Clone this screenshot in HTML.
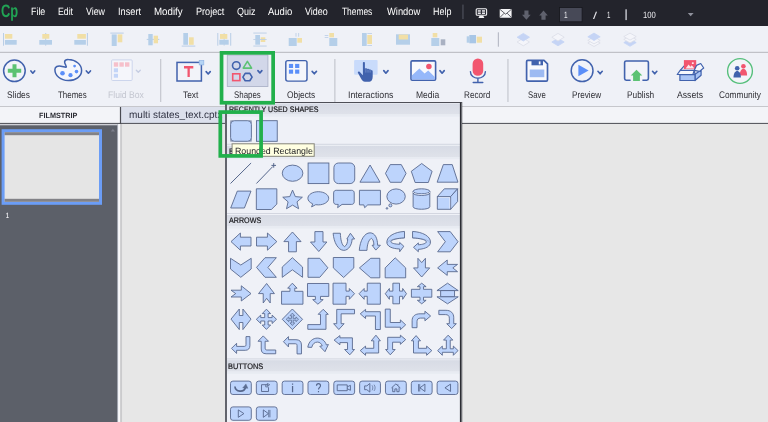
<!DOCTYPE html>
<html><head><meta charset="utf-8"><title>Adobe Captivate - Shapes</title>
<style>
html,body{margin:0;padding:0;}
body{width:768px;height:422px;overflow:hidden;position:relative;background:#e7e7e7;font-family:"Liberation Sans", sans-serif;}
.abs{position:absolute;}
#txt{position:absolute;left:0;top:0;width:768px;height:422px;will-change:transform;z-index:40;}
.t{position:absolute;white-space:nowrap;transform-origin:0 50%;font-family:"Liberation Sans", sans-serif;text-rendering:geometricPrecision;}
.t.hd{-webkit-text-stroke:0.25px currentColor;}
svg{position:absolute;left:0;top:0;overflow:visible;}

#titlebar{left:0;top:0;width:768px;height:26px;background:#23242c;}
#alignbar{left:0;top:26px;width:768px;height:26px;background:#eff1f7;}
#toolbar{left:0;top:52px;width:768px;height:55px;background:#eff1f7;}
#tabrow{left:0;top:107px;width:768px;height:17px;background:#f3f4f8;}
#filmstrip{left:0;top:124px;width:118px;height:298px;background:#5c6069;}
#stage{left:121px;top:124px;width:647px;height:298px;background:#e7e7e7;}
#panel{left:225px;top:102px;width:237px;height:320px;background:#eff1f7;}
#overlay{z-index:50;}

</style></head><body>
<div class="abs" id="titlebar"></div>
<div class="abs" id="alignbar"></div>
<div class="abs" id="toolbar"></div>
<div class="abs" id="tabrow"></div>
<div class="abs" id="stage"></div><div class="abs" id="filmstrip"></div>
<svg width="768" height="422" viewBox="0 0 768 422" id="chrome"><defs><linearGradient id="gap" x1="0" x2="1" y1="0" y2="0"><stop offset="0" stop-color="#e4e8f2"/><stop offset="0.5" stop-color="#f8f8f9"/><stop offset="1" stop-color="#fafafa"/></linearGradient><linearGradient id="hdr" x1="0" x2="0" y1="0" y2="1"><stop offset="0" stop-color="#d7dbe5"/><stop offset="1" stop-color="#dfe2ea"/></linearGradient></defs>
<rect x="0" y="51.8" width="768" height="1.1" fill="#bbbcc1" />
<rect x="0" y="106" width="768" height="1" fill="#c6c7cc" />
<rect x="0" y="107" width="120" height="16" fill="#f3f4f8" />
<rect x="121" y="107" width="105" height="16" fill="#dce0ec" />
<rect x="0" y="124" width="117.5" height="1.3" fill="#cfd0d6" />
<rect x="117.5" y="124" width="3.2" height="298" fill="url(#gap)" />
<rect x="120.6" y="124" width="1.0" height="298" fill="#9c9ca0" />
<rect x="121.6" y="124" width="0.6" height="298" fill="#e7e7e7" />
<rect x="0" y="122.9" width="768" height="1" fill="#4b4c53" />
<rect x="119.9" y="107" width="1.2" height="17" fill="#4a4b52" />
<rect x="1.6" y="129.2" width="100.4" height="75.6" fill="#6b9df6" />
<rect x="4.6" y="132.2" width="94.4" height="69.6" fill="#e5e5e5" />
<rect x="4.6" y="132.2" width="94.4" height="3" fill="#828287" />
<rect x="4.6" y="198.8" width="94.4" height="3" fill="#828287" />
<rect x="160" y="59" width="1.3" height="43" fill="#c8cad2" />
<rect x="334.2" y="59" width="1.3" height="43" fill="#c8cad2" />
<rect x="507.3" y="59" width="1.3" height="43" fill="#c8cad2" />
<rect x="227.3" y="55" width="40.6" height="31.5" fill="#d2d7e9" stroke="#adb2c8" stroke-width="0.9"/></svg>
<svg width="768" height="422" viewBox="0 0 768 422" id="topicons"><rect x="462.3" y="4.6" width="1.3" height="14.5" fill="#4b4d58"/>
<rect x="476.2" y="8.7" width="10.4" height="6.6" rx="1" fill="#2a2b34" stroke="#f2f2f4" stroke-width="1.1"/>
<rect x="477.8" y="10.2" width="3" height="1.5" fill="#e8e8ec"/><rect x="482" y="10.2" width="3" height="1.5" fill="#e8e8ec"/>
<rect x="477.8" y="12.5" width="3" height="1.5" fill="#e8e8ec"/><rect x="482" y="12.5" width="3" height="1.5" fill="#e8e8ec"/>
<path d="M479.6 15.8 L483.2 15.8 L484.4 17.9 L478.4 17.9 Z" fill="#f2f2f4"/>
<rect x="499.7" y="9.1" width="11.9" height="8.6" rx="0.6" fill="#f4f4f6"/>
<path d="M500 9.4 L505.65 14.2 L511.3 9.4 M500 17.4 L504.2 13.2 M511.3 17.4 L507.1 13.2" fill="none" stroke="#3a3b44" stroke-width="0.8"/>
<path d="M524.4 10.6 H528.5 V14.8 H530.7 L526.4 19.7 L522 14.8 H524.4 Z" fill="#5f616d"/>
<path d="M541.4 19.7 H545.6 V15.5 H547.8 L543.5 10.6 L539.2 15.5 H541.4 Z" fill="#5f616d"/>
<rect x="559.5" y="7.4" width="22.6" height="14.4" fill="#474957" stroke="#16171c" stroke-width="0.8"/>
<rect x="625.4" y="9.3" width="1.4" height="10.8" fill="#c9cad2"/>
<path d="M687.8 13 H693.6 L690.7 16.2 Z" fill="#8f919c"/>
<rect x="3" y="33" width="1.00" height="12.70" fill="#b9cee6"/>
<rect x="4.9" y="34" width="7.40" height="4.70" fill="#f1dfa6"/>
<rect x="4.9" y="40" width="11.80" height="4.70" fill="#b5cfe9"/>
<rect x="45.2" y="33" width="1.00" height="12.70" fill="#b9cee6"/>
<rect x="42.3" y="34" width="7.00" height="4.70" fill="#f1dfa6"/>
<rect x="39.3" y="40" width="12.70" height="4.70" fill="#b5cfe9"/>
<rect x="86.9" y="33" width="1.00" height="12.70" fill="#b9cee6"/>
<rect x="77.3" y="34" width="8.60" height="4.70" fill="#f1dfa6"/>
<rect x="74.3" y="40" width="11.60" height="4.70" fill="#b5cfe9"/>
<rect x="110.3" y="32.6" width="13.40" height="1.00" fill="#b9cee6"/>
<rect x="111.7" y="34.4" width="5.00" height="11.60" fill="#b5cfe9"/>
<rect x="117.7" y="34.4" width="4.60" height="7.90" fill="#f1dfa6"/>
<rect x="146.7" y="38.9" width="12.60" height="1.00" fill="#b9cee6"/>
<rect x="148.3" y="34" width="4.40" height="11.30" fill="#b5cfe9"/>
<rect x="153.7" y="35.7" width="4.30" height="7.60" fill="#f1dfa6"/>
<rect x="181.7" y="45.6" width="13.60" height="1.00" fill="#b9cee6"/>
<rect x="183.3" y="33" width="4.70" height="11.80" fill="#b5cfe9"/>
<rect x="189" y="37.3" width="4.70" height="7.50" fill="#f1dfa6"/>
<rect x="217.3" y="33" width="1.00" height="12.70" fill="#b9cee6"/>
<rect x="230.2" y="33" width="1.00" height="12.70" fill="#b9cee6"/>
<rect x="223.7" y="33" width="0.80" height="12.70" fill="#b9cee6"/>
<rect x="220" y="34" width="7.30" height="4.90" fill="#f1dfa6"/>
<rect x="219.3" y="39.8" width="9.40" height="4.90" fill="#b5cfe9"/>
<rect x="253.3" y="32.6" width="13.40" height="0.90" fill="#b9cee6"/>
<rect x="253.3" y="45.6" width="13.40" height="0.90" fill="#b9cee6"/>
<rect x="255.3" y="35" width="4.70" height="9.70" fill="#b5cfe9"/>
<rect x="260.7" y="37.3" width="4.60" height="4.70" fill="#f1dfa6"/>
<rect x="253.3" y="39.2" width="13.40" height="0.80" fill="#b9cee6"/>
<rect x="288.7" y="38" width="8.00" height="8.00" fill="#b5cfe9"/>
<rect x="297.3" y="38" width="4.70" height="4.70" fill="#f1dfa6"/>
<rect x="295.6" y="33" width="0.80" height="3.70" fill="#b9cee6"/>
<rect x="298.3" y="33" width="0.80" height="3.70" fill="#b9cee6"/>
<rect x="329.3" y="33" width="4.70" height="4.30" fill="#f1dfa6"/>
<rect x="329.3" y="38" width="8.00" height="8.00" fill="#b5cfe9"/>
<rect x="324.7" y="35.2" width="3.60" height="0.80" fill="#b9cee6"/>
<rect x="324.7" y="37" width="3.60" height="0.80" fill="#b9cee6"/>
<rect x="362" y="33" width="4.70" height="13.00" fill="#b5cfe9"/>
<rect x="367.3" y="35" width="4.70" height="9.00" fill="#f1dfa6"/>
<rect x="367.3" y="33" width="4.70" height="0.80" fill="#b9cee6"/>
<rect x="367.3" y="45.2" width="4.70" height="0.80" fill="#b9cee6"/>
<rect x="396" y="34.3" width="14.00" height="10.40" fill="#b5cfe9"/>
<rect x="398.7" y="34.6" width="9.30" height="4.90" fill="#f1dfa6"/>
<rect x="432.7" y="33" width="4.60" height="4.30" fill="#f1dfa6"/>
<rect x="431.3" y="38" width="8.00" height="8.00" fill="#b5cfe9"/>
<rect x="440.7" y="39.3" width="4.60" height="6.00" fill="#a9b1c2"/>
<rect x="466.7" y="36.3" width="2.60" height="6.40" fill="#b5cfe9"/>
<rect x="469.3" y="35" width="6.70" height="8.30" fill="#a8c6e6"/>
<rect x="476.7" y="36.7" width="5.30" height="6.00" fill="#f1dfa6"/>
<rect x="497.8" y="32.3" width="1.20" height="14.40" fill="#b9bcc8"/>
<path d="M523.3 38.2 L529.5 42 L523.3 45.8 L517.0999999999999 42 Z" fill="#f4f5fa" stroke="#dadde7" stroke-width="0.8"/>
<path d="M523.3 33.400000000000006 L529.5 37.2 L523.3 41.0 L517.0999999999999 37.2 Z" fill="#c5d4f5" stroke="#c5d4f5" stroke-width="0.8"/>
<path d="M558 38.2 L564.2 42 L558 45.8 L551.8 42 Z" fill="#c5d4f5" stroke="#c5d4f5" stroke-width="0.8"/>
<path d="M558 33.400000000000006 L564.2 37.2 L558 41.0 L551.8 37.2 Z" fill="#f4f5fa" stroke="#dadde7" stroke-width="0.8"/>
<path d="M594 39.5 L600.2 43 L594 46.5 L587.8 43 Z" fill="#f4f5fa" stroke="#dadde7" stroke-width="0.8"/>
<path d="M594 36.9 L600.2 40.4 L594 43.9 L587.8 40.4 Z" fill="#f4f5fa" stroke="#dadde7" stroke-width="0.8"/>
<path d="M594 33.099999999999994 L600.2 36.8 L594 40.5 L587.8 36.8 Z" fill="#c5d4f5" stroke="#c5d4f5" stroke-width="0.8"/>
<path d="M630 38.9 L636.2 42.6 L630 46.300000000000004 L623.8 42.6 Z" fill="#c5d4f5" stroke="#c5d4f5" stroke-width="0.8"/>
<path d="M630 35.9 L636.2 39.4 L630 42.9 L623.8 39.4 Z" fill="#f4f5fa" stroke="#dadde7" stroke-width="0.8"/>
<path d="M630 33.1 L636.2 36.6 L630 40.1 L623.8 36.6 Z" fill="#f4f5fa" stroke="#dadde7" stroke-width="0.8"/>
<circle cx="14.4" cy="70.8" r="10.8" fill="#f1f3f9" stroke="#4162ad" stroke-width="1.5"/>
<path d="M12.5 64.2 H16.5 V68.7 H21.2 V72.7 H16.5 V77.2 H12.5 V72.7 H7.8 V68.7 H12.5 Z" fill="#5cc273"/>
<path d="M30.91 70.98 L32.8 73.22 L34.69 70.98" fill="none" stroke="#4162ad" stroke-width="1.65" stroke-linecap="round" stroke-linejoin="round"/>
<path d="M54.9 69.5 C54.9 66.5 58 65.6 61 66.2 C63.5 66.7 65.5 67.6 66.2 67.2 C67 66.6 64.4 63.5 64.6 61.8 C64.9 60 66.5 59.5 68.4 59.6 C75.5 59.8 81.6 64.2 81.6 70.4 C81.6 76.5 75.5 80.6 68.2 80.6 C60.5 80.6 54.9 75.5 54.9 69.5 Z" fill="#f4f6fc" stroke="#4162ad" stroke-width="1.5" stroke-linejoin="round"/>
<circle cx="62.5" cy="73.3" r="2.3" fill="#5b8ff9"/><circle cx="70.5" cy="75.2" r="2.1" fill="#5b8ff9"/><circle cx="76.5" cy="71.6" r="1.8" fill="#5b8ff9"/><circle cx="74.6" cy="66.1" r="1.4" fill="#5b8ff9"/>
<path d="M86.34 70.98 L88.4 73.22 L90.46 70.98" fill="none" stroke="#4162ad" stroke-width="1.65" stroke-linecap="round" stroke-linejoin="round"/>
<rect x="111.6" y="59.9" width="20.6" height="20.6" rx="1" fill="#f5f6fb" stroke="#ccd5ec" stroke-width="1"/>
<rect x="113.8" y="62.3" width="4.40" height="4.40" fill="#f6c0cb"/>
<rect x="119.4" y="62.3" width="4.40" height="4.40" fill="#f6c0cb"/>
<rect x="125" y="62.3" width="4.40" height="4.40" fill="#f6c0cb"/>
<rect x="113.8" y="68.3" width="4.20" height="4.00" fill="#c3d5f8"/>
<rect x="113.8" y="73.8" width="4.20" height="3.90" fill="#c3d5f8"/>
<path d="M136.32 70.16 L138.3 72.24 L140.28 70.16" fill="none" stroke="#c5cde2" stroke-width="1.3499999999999999" stroke-linecap="round" stroke-linejoin="round"/>
<rect x="177" y="62.4" width="24.4" height="18.6" fill="#f2f3f9" stroke="#4162ad" stroke-width="1.5"/>
<path d="M184 66.1 H193.3 V68.4 H189.8 V77 H187.5 V68.4 H184 Z" fill="#f2566f"/>
<rect x="199.2" y="60.5" width="4.6" height="4.4" fill="#b5d4f4" stroke="#8fb4e4" stroke-width="0.7"/>
<path d="M206.14 71.6 L208.2 74.0 L210.26 71.6" fill="none" stroke="#4162ad" stroke-width="1.65" stroke-linecap="round" stroke-linejoin="round"/>
<circle cx="236.3" cy="65.6" r="3.8" fill="none" stroke="#4162ad" stroke-width="1.6"/>
<path d="M247.4 61.4 L251.6 68.1 H243.2 Z" fill="none" stroke="#5cc273" stroke-width="1.6" stroke-linejoin="round"/>
<rect x="232.7" y="73.8" width="7.2" height="6.8" fill="none" stroke="#f2566f" stroke-width="1.6"/>
<path d="M245.2 73.4 H249.8 L252.1 77.1 L249.8 80.7 H245.2 L242.9 77.1 Z" fill="none" stroke="#4162ad" stroke-width="1.6" stroke-linejoin="round"/>
<path d="M257.92 70.6 L259.9 73.0 L261.88 70.6" fill="none" stroke="#4162ad" stroke-width="1.65" stroke-linecap="round" stroke-linejoin="round"/>
<rect x="285.8" y="60.6" width="21.2" height="20.5" rx="2" fill="#f5f6fb" stroke="#4162ad" stroke-width="1.45"/>
<rect x="288.9" y="63.9" width="4.20" height="4.10" fill="#5b8ff9"/>
<rect x="295.1" y="63.9" width="4.20" height="4.10" fill="#5b8ff9"/>
<rect x="288.9" y="69.6" width="4.20" height="4.10" fill="#5b8ff9"/>
<rect x="295.1" y="69.6" width="4.20" height="4.10" fill="#5b8ff9"/>
<path d="M312.15 71.4 L314.29999999999995 73.8 L316.45 71.4" fill="none" stroke="#4162ad" stroke-width="1.65" stroke-linecap="round" stroke-linejoin="round"/>
<rect x="354.1" y="60.1" width="23.5" height="14.7" rx="1" fill="#c9dbfb"/>
<path d="M362.9 63 C362.9 61.7 364.9 61.7 364.9 63 V68.6 L365.2 68.4 C366 68 367 68.2 367.4 68.9 C368.2 68.5 369.2 68.8 369.5 69.5 C370.4 69.2 371.3 69.6 371.5 70.3 C372.2 70.2 372.7 70.8 372.7 71.5 V76.5 C372.7 79.5 371.5 81.7 369.5 81.7 H365 C363 81.7 362 80 361 78.4 L358 73 C357.4 71.8 358.5 70.8 359.6 71.8 L362.9 75.2 Z" fill="#4162ad"/>
<path d="M365.9 69.2 V72.6 M368 69.6 V72.6 M370.1 70.2 V72.6" fill="none" stroke="#9fb6e6" stroke-width="0.5"/>
<path d="M383.75 70.62 L385.9 73.18 L388.05 70.62" fill="none" stroke="#4162ad" stroke-width="1.65" stroke-linecap="round" stroke-linejoin="round"/>
<rect x="411" y="60.9" width="24.6" height="19.4" rx="1.2" fill="#f8f9fd" stroke="#4162ad" stroke-width="1.6"/>
<path d="M411.8 79.5 V75.6 L419.4 68.4 L424.6 73.6 L428.2 70.6 L434.8 77 V79.5 Z" fill="#96b8fa"/>
<circle cx="428.9" cy="66.5" r="2.75" fill="#f2566f"/>
<path d="M439.95 70.62 L442.1 73.18 L444.25 70.62" fill="none" stroke="#4162ad" stroke-width="1.65" stroke-linecap="round" stroke-linejoin="round"/>
<rect x="472.6" y="58.5" width="10.6" height="17.2" rx="5.3" fill="#f2566f"/>
<path d="M470.4 71.6 C470.4 80.4 485.4 80.4 485.4 71.6 M477.9 78.2 V82.4 M473.2 82.5 H482.8" fill="none" stroke="#4162ad" stroke-width="1.4" stroke-linecap="round"/>
<path d="M527.8 60.4 H544 L547.5 63.9 V79.8 C547.5 80.6 547 81.2 546.2 81.2 H527.8 C527 81.2 526.6 80.6 526.6 79.8 V61.8 C526.6 61 527 60.4 527.8 60.4 Z" fill="#f8f9fd" stroke="#4162ad" stroke-width="1.7" stroke-linejoin="round"/>
<rect x="531.5" y="60.6" width="11.50" height="4.70" fill="#4162ad"/>
<rect x="538.8" y="61.4" width="1.70" height="3.00" fill="#f8f9fd"/>
<rect x="529.7" y="69.5" width="14.60" height="7.70" fill="#9dbaf2"/>
<circle cx="582.1" cy="70.7" r="10.9" fill="#f1f3f9" stroke="#4162ad" stroke-width="1.5"/>
<path d="M578.4 64.8 L588.6 70.5 L578.4 76.2 Z" fill="#5b8ff9"/>
<path d="M597.95 71.31 L600.1 73.79 L602.25 71.31" fill="none" stroke="#4162ad" stroke-width="1.65" stroke-linecap="round" stroke-linejoin="round"/>
<path d="M630.6 80.2 H626.2 C625.2 80.2 624.6 79.6 624.6 78.6 V62.6 C624.6 61.6 625.2 61 626.2 61 H646.8 C647.8 61 648.4 61.6 648.4 62.6 V78.6 C648.4 79.6 647.8 80.2 646.8 80.2 H642.4" fill="#f2f3f9" stroke="#4162ad" stroke-width="1.6"/>
<path d="M636.5 69.8 L642.3 75.4 H639.9 V81 H633.1 V75.4 H630.7 Z" fill="#5cc273"/>
<path d="M652.55 71.31 L654.7 73.79 L656.85 71.31" fill="none" stroke="#4162ad" stroke-width="1.65" stroke-linecap="round" stroke-linejoin="round"/>
<path d="M680.2 70.3 L684 66.1 H697" fill="none" stroke="#4162ad" stroke-width="1.2"/>
<rect x="683.9" y="60.1" width="12.3" height="9" fill="#f2566f"/>
<path d="M685.6 68.6 L688.6 64.4 L690.4 66.8 L691.8 65.2 L694.4 68.6 Z" fill="#fde8ec"/><rect x="691.9" y="62.3" width="1.8" height="1.7" fill="#fde8ec"/>
<path d="M695 74.3 L701.1 69.9 V75.2 L695 80.5 Z" fill="#a9c4f5" stroke="#4162ad" stroke-width="1.2" stroke-linejoin="round"/>
<path d="M679.9 74.6 H695 V80.5 H679.9 Z" fill="#a9c4f5" stroke="#4162ad" stroke-width="1.2" stroke-linejoin="round"/>
<path d="M677.2 74.5 L680.2 70.3 H694.3 L692.9 74.4 Z" fill="#f6f8fd" stroke="#4162ad" stroke-width="1.2" stroke-linejoin="round"/>
<path d="M694.3 70.3 L696.5 65.4 L700.7 63.5 L703.7 68 L699.4 71.4 Z" fill="#f6f8fd" stroke="#4162ad" stroke-width="1.2" stroke-linejoin="round"/>
<path d="M694.3 70.3 L695 74.3" fill="none" stroke="#4162ad" stroke-width="1.2"/>
<circle cx="740" cy="71" r="12.4" fill="#f2f4f9" stroke="#55bf7b" stroke-width="1.35"/>
<circle cx="743.4" cy="66.2" r="2.3" fill="#f2566f"/><path d="M739.7 75.6 C739.7 66.6 747.1 66.6 747.1 75.6 Z" fill="#f2566f"/>
<circle cx="737.2" cy="68.2" r="2.3" fill="#4162ad"/><path d="M733.5 77.4 C733.5 68.8 740.9 68.8 740.9 77.4 Z" fill="#4162ad"/>
<path d="M110.8 131.4 L112.9 128.8 L115 131.4 Z" fill="#7b7e8b"/></svg>
<div class="abs" id="panel"></div>
<svg width="768" height="422" viewBox="0 0 768 422" id="panelchrome"><rect x="227" y="103.5" width="233" height="11" fill="url(#hdr)" />
<rect x="227" y="114.5" width="233" height="2.2" fill="#e8ebf2" />
<rect x="227" y="145.8" width="233" height="11.2" fill="url(#hdr)" />
<rect x="227" y="157.0" width="233" height="2.2" fill="#e8ebf2" />
<rect x="227" y="215" width="233" height="11.4" fill="url(#hdr)" />
<rect x="227" y="226.4" width="233" height="2.2" fill="#e8ebf2" />
<rect x="227" y="360.2" width="233" height="11.4" fill="url(#hdr)" />
<rect x="227" y="371.59999999999997" width="233" height="2.2" fill="#e8ebf2" />
<rect x="227" y="143.8" width="233" height="1" fill="#d3d6e0" />
<rect x="227" y="213" width="233" height="1" fill="#d3d6e0" />
<rect x="227" y="358.4" width="233" height="1" fill="#d3d6e0" />
<rect x="225" y="102" width="2" height="320" fill="#62646c" />
<rect x="461.6" y="102" width="1" height="320" fill="#2c2d34" opacity="0.35"/>
<rect x="459.9" y="102" width="1.7" height="320" fill="#2c2d34" />
<rect x="225" y="102.1" width="236.6" height="0.9" fill="#3c3d45" /></svg>
<svg width="768" height="422" viewBox="0 0 768 422" id="shapes"><g transform="translate(230.30 120.4)" fill="#bdd4fc" stroke="#56678c" stroke-width="0.88" stroke-linejoin="miter"><rect x="0.3" y="0.3" width="20.8" height="20.6" rx="3.6"/><path d="M0.3 3 V0.3 H3 M18.4 0.3 H21.1 V3 M21.1 18.2 V20.9 H18.4 M3 20.9 H0.3 V18.2" fill="none" stroke-width="0.5"/></g>
<g transform="translate(256.13 120.4)" fill="#bdd4fc" stroke="#56678c" stroke-width="0.88" stroke-linejoin="miter"><rect x="0.3" y="0.3" width="20.8" height="20.6"/></g>
<g transform="translate(230.30 162.7)" fill="#bdd4fc" stroke="#56678c" stroke-width="0.88" stroke-linejoin="miter"><path d="M0.2 20.8 L20.8 0.3" fill="none" stroke-width="1"/></g>
<g transform="translate(256.13 162.7)" fill="#bdd4fc" stroke="#56678c" stroke-width="0.88" stroke-linejoin="miter"><path d="M0.3 20.8 L16.6 3.9 M17.6 0.4 V5 M15.3 2.7 H19.9" fill="none" stroke-width="1"/></g>
<g transform="translate(281.96 162.7)" fill="#bdd4fc" stroke="#56678c" stroke-width="0.88" stroke-linejoin="miter"><ellipse cx="10.6" cy="10.5" rx="10.3" ry="8.1"/></g>
<g transform="translate(307.79 162.7)" fill="#bdd4fc" stroke="#56678c" stroke-width="0.88" stroke-linejoin="miter"><rect x="0.3" y="0.3" width="20.8" height="20.6"/></g>
<g transform="translate(333.62 162.7)" fill="#bdd4fc" stroke="#56678c" stroke-width="0.88" stroke-linejoin="miter"><rect x="0.3" y="0.3" width="20.8" height="20.6" rx="4.6"/></g>
<g transform="translate(359.45 162.7)" fill="#bdd4fc" stroke="#56678c" stroke-width="0.88" stroke-linejoin="miter"><path d="M10.6 2.3 L20.6 19.5 H0.5 Z" /></g>
<g transform="translate(385.28 162.7)" fill="#bdd4fc" stroke="#56678c" stroke-width="0.88" stroke-linejoin="miter"><path d="M0.2 10.7 L5 1.9 H16 L20.8 10.7 L16 19.6 H5 Z" /></g>
<g transform="translate(411.11 162.7)" fill="#bdd4fc" stroke="#56678c" stroke-width="0.88" stroke-linejoin="miter"><path d="M10.6 0.8 L21 8.6 L17.2 19.8 H4 L0.2 8.6 Z" /></g>
<g transform="translate(436.94 162.7)" fill="#bdd4fc" stroke="#56678c" stroke-width="0.88" stroke-linejoin="miter"><path d="M6.4 1.9 H15.3 L21 19.5 H0.2 Z" /></g>
<g transform="translate(230.30 188.5)" fill="#bdd4fc" stroke="#56678c" stroke-width="0.88" stroke-linejoin="miter"><path d="M0.4 19.5 L7 2.6 H20.7 L14.1 19.5 Z" /></g>
<g transform="translate(256.13 188.5)" fill="#bdd4fc" stroke="#56678c" stroke-width="0.88" stroke-linejoin="miter"><path d="M0.2 0.3 H20.7 V15.6 L15.2 21 H0.2 Z" /></g>
<g transform="translate(281.96 188.5)" fill="#bdd4fc" stroke="#56678c" stroke-width="0.88" stroke-linejoin="miter"><path d="M10.60 1.60 L13.36 8.10 L20.40 8.72 L15.07 13.35 L16.65 20.23 L10.60 16.60 L4.55 20.23 L6.13 13.35 L0.80 8.72 L7.84 8.10 Z" /></g>
<g transform="translate(307.79 188.5)" fill="#bdd4fc" stroke="#56678c" stroke-width="0.88" stroke-linejoin="miter"><path d="M10.5 3.2 C16.3 3.2 20.9 6.2 20.9 9.8 C20.9 13.4 16.3 16.4 10.5 16.4 C9.6 16.4 8.7 16.3 7.9 16.2 L3.8 18.4 L4.9 15.3 C1.9 14.1 0.1 12.1 0.1 9.8 C0.1 6.2 4.7 3.2 10.5 3.2 Z" /></g>
<g transform="translate(333.62 188.5)" fill="#bdd4fc" stroke="#56678c" stroke-width="0.88" stroke-linejoin="miter"><path d="M2.6 1.8 H18 C19.6 1.8 20.6 2.8 20.6 4.4 V13.3 C20.6 14.9 19.6 15.9 18 15.9 H8.4 L4 19.2 L4.6 15.9 H2.6 C1 15.9 0 14.9 0 13.3 V4.4 C0 2.8 1 1.8 2.6 1.8 Z" /></g>
<g transform="translate(359.45 188.5)" fill="#bdd4fc" stroke="#56678c" stroke-width="0.88" stroke-linejoin="miter"><path d="M0 1.8 H21 V16.4 H8.3 L5.2 19.2 L4.4 16.4 H0 Z" /></g>
<g transform="translate(385.28 188.5)" fill="#bdd4fc" stroke="#56678c" stroke-width="0.88" stroke-linejoin="miter"><ellipse cx="10.8" cy="8" rx="9.2" ry="7.6"/><circle cx="5.1" cy="16.9" r="1.5"/><circle cx="1.7" cy="19.9" r="0.8"/></g>
<g transform="translate(411.11 188.5)" fill="#bdd4fc" stroke="#56678c" stroke-width="0.88" stroke-linejoin="miter"><path d="M2 2.8 V18.2 C2 21.6 18.7 21.6 18.7 18.2 V2.8" /><ellipse cx="10.35" cy="2.8" rx="8.35" ry="2.5"/><path d="M2 3.6 C2 7 18.7 7 18.7 3.6" fill="none" stroke="#eef1f8" stroke-width="0.9"/><path d="M2 4.4 C2 7.8 18.7 7.8 18.7 4.4" fill="none"/></g>
<g transform="translate(436.94 188.5)" fill="#bdd4fc" stroke="#56678c" stroke-width="0.88" stroke-linejoin="miter"><path d="M0.4 8.1 H13.7 V20.8 H0.4 Z" /><path d="M0.4 8.1 L7.4 0.3 H20.7 L13.7 8.1 Z" /><path d="M13.7 8.1 L20.7 0.3 V13 L13.7 20.8 Z" /><path d="M1 8.9 H12.9 M12.9 8.9 V20" fill="none" stroke="#eef1f8" stroke-width="0.7"/></g>
<g transform="translate(230.30 231.3)" fill="#bdd4fc" stroke="#56678c" stroke-width="0.88" stroke-linejoin="miter"><path d="M0.7 10.3 L10.1 1.7 V5.9 H20.7 V14.7 H10.1 V18.9 Z" /></g>
<g transform="translate(256.13 231.3)" fill="#bdd4fc" stroke="#56678c" stroke-width="0.88" stroke-linejoin="miter"><path d="M20.7 10.3 L11.3 1.7 V5.9 H0.4 V14.7 H11.3 V18.9 Z" /></g>
<g transform="translate(281.96 231.3)" fill="#bdd4fc" stroke="#56678c" stroke-width="0.88" stroke-linejoin="miter"><path d="M10.5 0.7 L19.1 10.3 H14.4 V20.5 H6.6 V10.3 H1.9 Z" /></g>
<g transform="translate(307.79 231.3)" fill="#bdd4fc" stroke="#56678c" stroke-width="0.88" stroke-linejoin="miter"><path d="M7.1 0.3 H15.2 V10.7 H19.1 L11 20.2 L2.7 10.7 H7.1 Z" /></g>
<g transform="translate(333.62 231.3)" fill="#bdd4fc" stroke="#56678c" stroke-width="0.88" stroke-linejoin="miter"><path d="M-0.5 1.95 H6.75 C6.9 8 8.2 14.2 10.9 15.3 C13 14.2 14 11.5 14.07 7.7 H13.2 L16.8 1.95 L21 7.7 H18.5 C18.3 13.5 15 19.06 10.2 19.06 C4.5 19.06 0.2 11 -0.5 1.95 Z" /></g>
<g transform="translate(359.45 231.3)" fill="#bdd4fc" stroke="#56678c" stroke-width="0.88" stroke-linejoin="miter"><path d="M-0.2 19.06 H7.54 C7.6 13 9.5 8 11.96 7.05 C13.6 8 14.4 10.5 14.44 13.95 H12.65 L16.37 18.8 L20.93 13.95 H18.17 C18.1 7 15.5 1.53 10.58 1.53 C5 1.53 0.6 9 -0.2 19.06 Z" /></g>
<g transform="translate(385.28 231.3)" fill="#bdd4fc" stroke="#56678c" stroke-width="0.88" stroke-linejoin="miter"><path d="M19.23 0.15 V6.64 C12 7 5.6 8.4 5.6 10.4 C5.6 11.9 9.5 12.8 14.4 12.99 V11.2 L18.54 14.92 L14.4 20.44 V17.68 C6.5 17.4 1.57 15 1.57 10.8 C1.57 5 9.5 0.6 19.23 0.15 Z" /><path d="M19.23 6.64 C10 6.9 2.6 8.7 1.7 12" fill="none" stroke-width="0.5" opacity="0.55"/></g>
<g transform="translate(411.11 231.3)" fill="#bdd4fc" stroke="#56678c" stroke-width="0.88" stroke-linejoin="miter"><path d="M1.44 0.15 V6.64 C8.7 7 15.2 8.4 15.2 10.6 C15.2 12.2 11.5 13.2 7.24 13.5 V11.6 L2.4 16 L7.24 20.44 V18.1 C14.5 17.6 19.38 15 19.38 10.8 C19.38 5 11.5 0.6 1.44 0.15 Z" /><path d="M1.44 6.64 C11 6.9 18.3 8.7 19.25 12" fill="none" stroke-width="0.5" opacity="0.55"/></g>
<g transform="translate(436.94 231.3)" fill="#bdd4fc" stroke="#56678c" stroke-width="0.88" stroke-linejoin="miter"><path d="M0.7 0.3 H13.3 L21.1 10.4 L13.3 20.5 H0.7 L8.4 10.4 Z" /></g>
<g transform="translate(230.30 257.1)" fill="#bdd4fc" stroke="#56678c" stroke-width="0.88" stroke-linejoin="miter"><path d="M0.2 1.2 L10.5 7.9 L20.9 1.2 V11.9 L10.5 20.2 L0.2 11.9 Z" /></g>
<g transform="translate(256.13 257.1)" fill="#bdd4fc" stroke="#56678c" stroke-width="0.88" stroke-linejoin="miter"><path d="M0.4 10.3 L8.9 0.6 H20.2 L11.8 10.3 L20.2 20.2 H8.9 Z" /></g>
<g transform="translate(281.96 257.1)" fill="#bdd4fc" stroke="#56678c" stroke-width="0.88" stroke-linejoin="miter"><path d="M10.4 0.6 L20.6 9.9 V20.2 L10.4 12.7 L0.3 20.2 V9.9 Z" /></g>
<g transform="translate(307.79 257.1)" fill="#bdd4fc" stroke="#56678c" stroke-width="0.88" stroke-linejoin="miter"><path d="M0.2 1.2 H12 L20.1 10.7 L12 20.2 H0.2 Z" /></g>
<g transform="translate(333.62 257.1)" fill="#bdd4fc" stroke="#56678c" stroke-width="0.88" stroke-linejoin="miter"><path d="M-0.3 0.4 H20.2 V10.8 L10 20.4 L-0.3 10.8 Z" /></g>
<g transform="translate(359.45 257.1)" fill="#bdd4fc" stroke="#56678c" stroke-width="0.88" stroke-linejoin="miter"><path d="M0 10.8 L11.3 1.2 H20.4 V20.7 H11.3 Z" /></g>
<g transform="translate(385.28 257.1)" fill="#bdd4fc" stroke="#56678c" stroke-width="0.88" stroke-linejoin="miter"><path d="M9.9 0.7 L20.4 10.8 V20.7 H-0.1 V10.8 Z" /></g>
<g transform="translate(411.11 257.1)" fill="#bdd4fc" stroke="#56678c" stroke-width="0.88" stroke-linejoin="miter"><path d="M6.8 1.2 L10.6 5.5 L14.3 1.2 V10.8 H18.6 L10.6 19.9 L2.4 10.8 H6.8 Z" /></g>
<g transform="translate(436.94 257.1)" fill="#bdd4fc" stroke="#56678c" stroke-width="0.88" stroke-linejoin="miter"><path d="M0.7 10.8 L10.3 2.9 V7.3 H20.6 L15.9 10.8 L20.6 14.6 H10.3 V18.3 Z" /></g>
<g transform="translate(230.30 282.9)" fill="#bdd4fc" stroke="#56678c" stroke-width="0.88" stroke-linejoin="miter"><path d="M20.7 10.7 L11 2.9 V7.3 H0.7 L5.4 10.7 L0.7 14.1 H11 V18.1 Z" /></g>
<g transform="translate(256.13 282.9)" fill="#bdd4fc" stroke="#56678c" stroke-width="0.88" stroke-linejoin="miter"><path d="M10.5 0.6 L18.3 10.7 H14.1 V20.1 L10.5 15.4 L7.1 20.1 V10.7 H2.4 Z" /></g>
<g transform="translate(281.96 282.9)" fill="#bdd4fc" stroke="#56678c" stroke-width="0.88" stroke-linejoin="miter"><path d="M10.4 0.3 L15.1 5.3 H12.8 V8.4 H21 V21.3 H-0.4 V8.4 H8 V5.3 H5.7 Z" /></g>
<g transform="translate(307.79 282.9)" fill="#bdd4fc" stroke="#56678c" stroke-width="0.88" stroke-linejoin="miter"><path d="M-0.3 0.6 H21 V13.5 H12.7 V16.7 H15.4 L10.1 21.3 L4.9 16.7 H7.6 V13.5 H-0.3 Z" /></g>
<g transform="translate(333.62 282.9)" fill="#bdd4fc" stroke="#56678c" stroke-width="0.88" stroke-linejoin="miter"><path d="M-0.6 0.3 H12.4 V8.2 H15.7 V5.6 L20.9 10.8 L15.7 16.4 V13.4 H12.4 V21.3 H-0.6 Z" /></g>
<g transform="translate(359.45 282.9)" fill="#bdd4fc" stroke="#56678c" stroke-width="0.88" stroke-linejoin="miter"><path d="M-0.4 10.8 L4.7 5.6 V8.2 H7.8 V0.3 H20.9 V21.3 H7.8 V13.4 H4.7 V16.4 Z" /></g>
<g transform="translate(385.28 282.9)" fill="#bdd4fc" stroke="#56678c" stroke-width="0.88" stroke-linejoin="miter"><path d="M0 10.8 L4.1 5.6 V8.2 H7.6 V0.3 H14.25 V8.2 H17.4 V5.6 L21.2 10.8 L17.4 16.4 V13.4 H14.25 V20.9 H7.6 V13.4 H4.1 V16.4 Z" /></g>
<g transform="translate(411.11 282.9)" fill="#bdd4fc" stroke="#56678c" stroke-width="0.88" stroke-linejoin="miter"><path d="M10.6 0.3 L15 3.8 H12.4 V6.4 H20.7 V14.3 H12.4 V17.4 H15 L10.6 20.9 L6.25 17.4 H8.9 V14.3 H0.3 V6.4 H8.9 V3.8 H6.25 Z" /></g>
<g transform="translate(436.94 282.9)" fill="#bdd4fc" stroke="#56678c" stroke-width="0.88" stroke-linejoin="miter"><path d="M10.6 0.3 L21.3 7.7 H0 Z" /><path d="M3.7 7.7 H17.6 V13.9 H3.7 Z" /><path d="M0 13.9 H21.3 L10.6 20.9 Z" /></g>
<g transform="translate(230.30 308.7)" fill="#bdd4fc" stroke="#56678c" stroke-width="0.88" stroke-linejoin="miter"><path d="M0.7 10.4 L9 0.3 V6.8 H12.6 V0.3 L20.7 10.4 L12.6 20.9 V13.8 H9 V20.9 Z" /></g>
<g transform="translate(256.13 308.7)" fill="#bdd4fc" stroke="#56678c" stroke-width="0.88" stroke-linejoin="miter"><path d="M10.3 0.5 L14.5 4.9 H12.0 V8.9 H15.999999999999998 V6.3999999999999995 L20.4 10.6 L15.999999999999998 14.8 V12.299999999999999 H12.0 V16.299999999999997 H14.5 L10.3 20.7 L6.1000000000000005 16.299999999999997 H8.600000000000001 V12.299999999999999 H4.600000000000001 V14.8 L0.20000000000000107 10.6 L4.600000000000001 6.3999999999999995 V8.9 H8.600000000000001 V4.9 H6.1000000000000005 Z" /></g>
<g transform="translate(281.96 308.7)" fill="#bdd4fc" stroke="#56678c" stroke-width="0.88" stroke-linejoin="miter"><path d="M10.4 0.3 L20.6 10.6 L10.4 20.9 L0.3 10.6 Z" /><path d="M10.4 4.3999999999999995 L12.8 7.0 H11.3 V9.7 H14.000000000000002 V8.2 L16.6 10.6 L14.000000000000002 13.0 V11.5 H11.3 V14.200000000000001 H12.8 L10.4 16.8 L8.0 14.200000000000001 H9.5 V11.5 H6.800000000000001 V13.0 L4.2 10.6 L6.800000000000001 8.2 V9.7 H9.5 V7.0 H8.0 Z" fill="#a9c2ee" stroke-width="0.7"/></g>
<g transform="translate(307.79 308.7)" fill="#bdd4fc" stroke="#56678c" stroke-width="0.88" stroke-linejoin="miter"><path d="M0 15.9 H12.7 V5.6 H10.4 L15.4 0.6 L20.5 5.6 H18.2 V20.6 H0 Z" /></g>
<g transform="translate(333.62 308.7)" fill="#bdd4fc" stroke="#56678c" stroke-width="0.88" stroke-linejoin="miter"><path d="M3.1 0.7 H20.9 V5.1 H7.5 V15 H10.5 L5.2 20.8 L0 15 H3.1 Z" /></g>
<g transform="translate(359.45 308.7)" fill="#bdd4fc" stroke="#56678c" stroke-width="0.88" stroke-linejoin="miter"><path d="M0.8 5.1 L6.1 0.7 V3 H20.9 V20.8 H16 V7.3 H6.1 V9.8 Z" /></g>
<g transform="translate(385.28 308.7)" fill="#bdd4fc" stroke="#56678c" stroke-width="0.88" stroke-linejoin="miter"><path d="M0 0.4 H5 V13.8 H15.1 V11.2 L20.4 16.1 L15.1 21 V18.5 H0 Z" /></g>
<g transform="translate(411.11 308.7)" fill="#bdd4fc" stroke="#56678c" stroke-width="0.88" stroke-linejoin="miter"><path d="M1 19 V12 C1 7.5 4 5.1 9 5.1 H13.8 V2.5 L19.5 7.3 L13.8 12.1 V9.4 H9.5 C7 9.4 5.9 10.5 5.9 13 V19 Z" /></g>
<g transform="translate(436.94 308.7)" fill="#bdd4fc" stroke="#56678c" stroke-width="0.88" stroke-linejoin="miter"><path d="M1.9 1.6 H9 C14 1.6 16.8 4.5 16.8 9 V15 H19.4 L14.7 19.9 L9.8 15 H12.4 V9.5 C12.4 7 11 5.9 8.5 5.9 H1.9 Z" /></g>
<g transform="translate(230.30 334.5)" fill="#bdd4fc" stroke="#56678c" stroke-width="0.88" stroke-linejoin="miter"><path d="M15.7 2.1 H19.6 V11 C19.6 14 18 15.8 15 15.8 H6.3 V18.9 L1.2 13.9 L6.3 8.8 V11.9 H14 C15.2 11.9 15.7 11.4 15.7 10 Z" /></g>
<g transform="translate(256.13 334.5)" fill="#bdd4fc" stroke="#56678c" stroke-width="0.88" stroke-linejoin="miter"><path d="M7.1 1.4 L12.4 6.75 H9 V13.5 C9 15 9.6 15.5 11 15.5 H19.6 V19.25 H10 C6.5 19.25 5.1 17.5 5.1 14.5 V6.75 H1.9 Z" /></g>
<g transform="translate(281.96 334.5)" fill="#bdd4fc" stroke="#56678c" stroke-width="0.88" stroke-linejoin="miter"><path d="M1.5 7.2 L6.5 2.1 V5.2 H14 C17.5 5.2 19.5 7 19.5 10.5 V19.4 H15.1 V11 C15.1 9.8 14.6 9.25 13.4 9.25 H6.5 V12.4 Z" /></g>
<g transform="translate(307.79 334.5)" fill="#bdd4fc" stroke="#56678c" stroke-width="0.88" stroke-linejoin="miter"><path d="M0 12.7 C1 6.5 5.5 3.6 9.5 3.6 C14 3.6 17.5 6.5 18.6 10.5 L20.6 10 L17.2 17.2 L12 11.8 L14.4 11.4 C13.6 9 12 7.6 9.6 7.6 C7 7.6 4.8 9.2 3.9 12.9 Z" /></g>
<g transform="translate(333.62 334.5)" fill="#bdd4fc" stroke="#56678c" stroke-width="0.88" stroke-linejoin="miter"><path d="M0.5 5.6 L6.3 1.1 V3.35 H18.8 V15 H20.9 L16.2 20.3 L11 15 H13.9 V8.1 H6.3 V10.3 Z" /></g>
<g transform="translate(359.45 334.5)" fill="#bdd4fc" stroke="#56678c" stroke-width="0.88" stroke-linejoin="miter"><path d="M16.5 0.7 L20.9 6.3 H19.2 V18.5 H6.1 V20.8 L0.8 16.1 L6.1 11.6 V13.8 H14.3 V6.3 H11.8 Z" /></g>
<g transform="translate(385.28 334.5)" fill="#bdd4fc" stroke="#56678c" stroke-width="0.88" stroke-linejoin="miter"><path d="M20.4 5.1 L15.1 0.7 V2.8 H2.4 V15 H0.3 L5 20.3 L9.9 15 H7.3 V7.7 H15.1 V9.8 Z" /></g>
<g transform="translate(411.11 334.5)" fill="#bdd4fc" stroke="#56678c" stroke-width="0.88" stroke-linejoin="miter"><path d="M5 1.1 L9.4 6.3 H7.3 V13.8 H15.5 V11.6 L20.7 16.1 L15.5 20.8 V18.5 H2.4 V6.3 H0.3 Z" /></g>
<g transform="translate(436.94 334.5)" fill="#bdd4fc" stroke="#56678c" stroke-width="0.88" stroke-linejoin="miter"><path d="M11.2 0.7 L15.9 5.6 H13.3 V14.3 H16.4 V11.6 L21.1 16.1 L16.4 20.8 V17.8 H5.4 V20.8 L0.7 16.1 L5.4 11.6 V14.3 H9.4 V5.6 H6.6 Z" /></g>
<g transform="translate(230.30 377.3)" fill="#bdd4fc" stroke="#56678c" stroke-width="0.88" stroke-linejoin="miter"><rect x="0.2" y="3.8" width="20.8" height="13.4" rx="2.4"/><path d="M4.6 9.2 C5.2 15 13.8 15.4 15.2 10.2" fill="none" stroke-width="1.7"/><path d="M12.4 10.6 L15.6 6.6 L17.6 11 Z" fill="#5d6e93" stroke-width="0.4"/></g>
<g transform="translate(256.13 377.3)" fill="#bdd4fc" stroke="#56678c" stroke-width="0.88" stroke-linejoin="miter"><rect x="0.2" y="3.8" width="20.8" height="13.4" rx="2.4"/><path d="M5.4 7.4 H11.6 M12.4 10 V14.2 H5.4 V7.4" fill="none" stroke-width="0.9"/><path d="M9.6 9.6 H12.4 M11.2 6.2 L13.6 7.4 L11.2 8.8 Z M9.6 7.4 V9.6" fill="none" stroke-width="0.8"/></g>
<g transform="translate(281.96 377.3)" fill="#bdd4fc" stroke="#56678c" stroke-width="0.88" stroke-linejoin="miter"><rect x="0.2" y="3.8" width="20.8" height="13.4" rx="2.4"/><path d="M10.6 8.8 V14.9 M10.6 6.1 V7.4" fill="none" stroke-width="1.25"/></g>
<g transform="translate(307.79 377.3)" fill="#bdd4fc" stroke="#56678c" stroke-width="0.88" stroke-linejoin="miter"><rect x="0.2" y="3.8" width="20.8" height="13.4" rx="2.4"/><path d="M8.7 8.4 C8.7 5.6 12.7 5.6 12.7 8.4 C12.7 10.2 10.7 10.2 10.7 12.2 M10.7 13.7 V14.9" fill="none" stroke-width="1.15"/></g>
<g transform="translate(333.62 377.3)" fill="#bdd4fc" stroke="#56678c" stroke-width="0.88" stroke-linejoin="miter"><rect x="0.2" y="3.8" width="20.8" height="13.4" rx="2.4"/><path d="M3.6 7.6 H13.6 V13.4 H3.6 Z M13.6 9.6 L16.8 8 V13 L13.6 11.4" fill="none" stroke-width="0.9"/></g>
<g transform="translate(359.45 377.3)" fill="#bdd4fc" stroke="#56678c" stroke-width="0.88" stroke-linejoin="miter"><rect x="0.2" y="3.8" width="20.8" height="13.4" rx="2.4"/><path d="M5.2 8.6 H7.4 L10.4 6.2 V14.8 L7.4 12.4 H5.2 Z" fill="none" stroke-width="0.9"/><path d="M12.6 8 C13.6 9.4 13.6 11.6 12.6 13 M14.6 7.4 C16 9.2 16 11.8 14.6 13.6" fill="none" stroke-width="0.7"/></g>
<g transform="translate(385.28 377.3)" fill="#bdd4fc" stroke="#56678c" stroke-width="0.88" stroke-linejoin="miter"><rect x="0.2" y="3.8" width="20.8" height="13.4" rx="2.4"/><path d="M6.2 10.6 L10.6 6.6 L15 10.6 M7.4 10 V14.4 H9.6 V11.6 H11.6 V14.4 H13.8 V10 M12.6 7 V8.2" fill="none" stroke-width="0.9"/></g>
<g transform="translate(411.11 377.3)" fill="#bdd4fc" stroke="#56678c" stroke-width="0.88" stroke-linejoin="miter"><rect x="0.2" y="3.8" width="20.8" height="13.4" rx="2.4"/><path d="M7.4 6.8 V14.2 M8.6 6.8 V14.2" fill="none" stroke-width="0.8"/><path d="M13.8 6.8 L8.8 10.5 L13.8 14.2 Z" fill="none" stroke-width="0.9"/></g>
<g transform="translate(436.94 377.3)" fill="#bdd4fc" stroke="#56678c" stroke-width="0.88" stroke-linejoin="miter"><rect x="0.2" y="3.8" width="20.8" height="13.4" rx="2.4"/><path d="M13.6 6.8 L8 10.5 L13.6 14.2 Z" fill="none" stroke-width="0.9"/></g>
<g transform="translate(230.30 403.1)" fill="#bdd4fc" stroke="#56678c" stroke-width="0.88" stroke-linejoin="miter"><rect x="0.2" y="3.8" width="20.8" height="13.4" rx="2.4"/><path d="M8 6.8 L13.6 10.5 L8 14.2 Z" fill="none" stroke-width="0.9"/></g>
<g transform="translate(256.13 403.1)" fill="#bdd4fc" stroke="#56678c" stroke-width="0.88" stroke-linejoin="miter"><rect x="0.2" y="3.8" width="20.8" height="13.4" rx="2.4"/><path d="M7.2 6.8 L12.2 10.5 L7.2 14.2 Z" fill="none" stroke-width="0.9"/><path d="M12.6 6.8 V14.2 M13.8 6.8 V14.2" fill="none" stroke-width="0.8"/></g></svg>
<svg width="768" height="422" viewBox="0 0 768 422" id="tip"><rect x="232.1" y="143.8" width="82.1" height="12.5" fill="#ffffe1" stroke="#85857a" stroke-width="1"/></svg>
<svg width="768" height="422" viewBox="0 0 768 422" id="overlay"><rect x="221.55" y="52.85" width="51.6" height="49.9" fill="none" stroke="#21b04b" stroke-width="3.7"/><rect x="220.3" y="112.1" width="40.8" height="43.8" fill="none" stroke="#21b04b" stroke-width="3.7"/></svg>
<div id="txt">
<span class="t" id="t0" style="left:31.0px;top:6.20px;font-size:10.5px;line-height:12.6px;color:#ffffff;font-weight:normal;transform:scaleX(0.8451);">File</span>
<span class="t" id="t1" style="left:58.0px;top:6.20px;font-size:10.5px;line-height:12.6px;color:#ffffff;font-weight:normal;transform:scaleX(0.8290);">Edit</span>
<span class="t" id="t2" style="left:86.0px;top:6.20px;font-size:10.5px;line-height:12.6px;color:#ffffff;font-weight:normal;transform:scaleX(0.8415);">View</span>
<span class="t" id="t3" style="left:118.0px;top:6.20px;font-size:10.5px;line-height:12.6px;color:#ffffff;font-weight:normal;transform:scaleX(0.8757);">Insert</span>
<span class="t" id="t4" style="left:154.3px;top:6.20px;font-size:10.5px;line-height:12.6px;color:#ffffff;font-weight:normal;transform:scaleX(0.9277);">Modify</span>
<span class="t" id="t5" style="left:196.0px;top:6.20px;font-size:10.5px;line-height:12.6px;color:#ffffff;font-weight:normal;transform:scaleX(0.8658);">Project</span>
<span class="t" id="t6" style="left:237.3px;top:6.20px;font-size:10.5px;line-height:12.6px;color:#ffffff;font-weight:normal;transform:scaleX(0.8521);">Quiz</span>
<span class="t" id="t7" style="left:268.0px;top:6.20px;font-size:10.5px;line-height:12.6px;color:#ffffff;font-weight:normal;transform:scaleX(0.9047);">Audio</span>
<span class="t" id="t8" style="left:305.3px;top:6.20px;font-size:10.5px;line-height:12.6px;color:#ffffff;font-weight:normal;transform:scaleX(0.8511);">Video</span>
<span class="t" id="t9" style="left:342.0px;top:6.20px;font-size:10.5px;line-height:12.6px;color:#ffffff;font-weight:normal;transform:scaleX(0.7987);">Themes</span>
<span class="t" id="t10" style="left:386.7px;top:6.20px;font-size:10.5px;line-height:12.6px;color:#ffffff;font-weight:normal;transform:scaleX(0.8913);">Window</span>
<span class="t" id="t11" style="left:433.3px;top:6.20px;font-size:10.5px;line-height:12.6px;color:#ffffff;font-weight:normal;transform:scaleX(0.8515);">Help</span>
<span class="t" id="t12" style="left:1.2px;top:0.80px;font-size:18px;line-height:21.6px;color:#21a354;font-weight:bold;transform:scaleX(0.7167);">Cp</span>
<span class="t" id="t13" style="left:564.3px;top:10.20px;font-size:9px;line-height:10.8px;color:#e8e8ec;font-weight:normal;transform:scaleX(0.7178);">1</span>
<span class="t" id="t14" style="left:592.7px;top:11.20px;font-size:10px;line-height:12.0px;color:#e8e8ec;font-weight:normal;transform:scaleX(1.4382);">/</span>
<span class="t" id="t15" style="left:607.0px;top:10.20px;font-size:9px;line-height:10.8px;color:#e8e8ec;font-weight:normal;transform:scaleX(0.6779);">1</span>
<span class="t" id="t16" style="left:642.7px;top:10.20px;font-size:9px;line-height:10.8px;color:#e8e8ec;font-weight:normal;transform:scaleX(0.8516);">100</span>
<span class="t" id="t17" style="left:7.0px;top:89.90px;font-size:9.6px;line-height:11.52px;color:#303036;font-weight:normal;transform:scaleX(0.8799);">Slides</span>
<span class="t" id="t18" style="left:58.0px;top:89.90px;font-size:9.6px;line-height:11.52px;color:#303036;font-weight:normal;transform:scaleX(0.8281);">Themes</span>
<span class="t" id="t19" style="left:107.8px;top:89.90px;font-size:9.6px;line-height:11.52px;color:#c3c6d0;font-weight:normal;transform:scaleX(0.8975);">Fluid Box</span>
<span class="t" id="t20" style="left:183.3px;top:89.90px;font-size:9.6px;line-height:11.52px;color:#303036;font-weight:normal;transform:scaleX(0.8745);">Text</span>
<span class="t" id="t21" style="left:233.7px;top:89.90px;font-size:9.6px;line-height:11.52px;color:#303036;font-weight:normal;transform:scaleX(0.8234);">Shapes</span>
<span class="t" id="t22" style="left:287.0px;top:89.90px;font-size:9.6px;line-height:11.52px;color:#303036;font-weight:normal;transform:scaleX(0.8699);">Objects</span>
<span class="t" id="t23" style="left:347.5px;top:89.90px;font-size:9.6px;line-height:11.52px;color:#303036;font-weight:normal;transform:scaleX(0.9172);">Interactions</span>
<span class="t" id="t24" style="left:415.5px;top:89.90px;font-size:9.6px;line-height:11.52px;color:#303036;font-weight:normal;transform:scaleX(0.8875);">Media</span>
<span class="t" id="t25" style="left:463.7px;top:89.90px;font-size:9.6px;line-height:11.52px;color:#303036;font-weight:normal;transform:scaleX(0.8501);">Record</span>
<span class="t" id="t26" style="left:527.5px;top:89.90px;font-size:9.6px;line-height:11.52px;color:#303036;font-weight:normal;transform:scaleX(0.8137);">Save</span>
<span class="t" id="t27" style="left:571.7px;top:89.90px;font-size:9.6px;line-height:11.52px;color:#303036;font-weight:normal;transform:scaleX(0.8527);">Preview</span>
<span class="t" id="t28" style="left:627.0px;top:89.90px;font-size:9.6px;line-height:11.52px;color:#303036;font-weight:normal;transform:scaleX(0.8643);">Publish</span>
<span class="t" id="t29" style="left:677.0px;top:89.90px;font-size:9.6px;line-height:11.52px;color:#303036;font-weight:normal;transform:scaleX(0.9029);">Assets</span>
<span class="t" id="t30" style="left:719.2px;top:89.90px;font-size:9.6px;line-height:11.52px;color:#303036;font-weight:normal;transform:scaleX(0.8657);">Community</span>
<span class="t" id="t31" style="left:39.2px;top:110.60px;font-size:7.6px;line-height:9.12px;color:#2c2d34;font-weight:bold;transform:scaleX(0.9556);">FILMSTRIP</span>
<span class="t" id="t32" style="left:6.2px;top:211.40px;font-size:7.5px;line-height:9.0px;color:#f0f0f4;font-weight:bold;transform:scaleX(0.6712);">1</span>
<span class="t" id="t33" style="left:129.3px;top:110.30px;font-size:10.2px;line-height:12.24px;color:#2e3040;font-weight:normal;transform:scaleX(0.9819);clip-path:inset(0 0.00px 0 0);">multi states_text.cptx</span>
<span class="t" id="t34" style="left:228.6px;top:104.70px;font-size:8px;line-height:9.6px;color:#18181c;font-weight:normal;transform:scaleX(0.8845);-webkit-text-stroke:0.2px;">RECENTLY USED SHAPES</span>
<span class="t" id="t35" style="left:228.7px;top:147.00px;font-size:8px;line-height:9.6px;color:#18181c;font-weight:normal;transform:scaleX(0.9327);clip-path:inset(0 20.80px 0 0);-webkit-text-stroke:0.2px;">BASIC</span>
<span class="t" id="t36" style="left:228.8px;top:215.80px;font-size:8px;line-height:9.6px;color:#18181c;font-weight:normal;transform:scaleX(0.8944);-webkit-text-stroke:0.2px;">ARROWS</span>
<span class="t" id="t37" style="left:228.2px;top:361.70px;font-size:8px;line-height:9.6px;color:#18181c;font-weight:normal;transform:scaleX(0.9244);-webkit-text-stroke:0.2px;">BUTTONS</span>
<span class="t" id="t38" style="left:234.5px;top:145.60px;font-size:9px;line-height:10.8px;color:#1c1c20;font-weight:normal;transform:scaleX(0.9778);z-index:30;">Rounded Rectangle</span>
</div>
</body></html>
